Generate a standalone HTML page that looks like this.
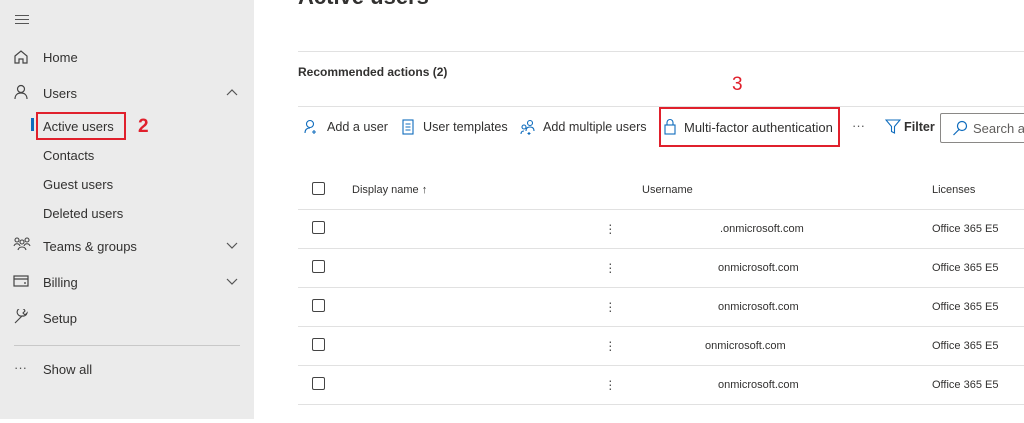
<!DOCTYPE html>
<html><head><style>
*{margin:0;padding:0;box-sizing:border-box}
body{width:1024px;height:423px;overflow:hidden;background:#fff;font-family:"Liberation Sans",sans-serif;color:#323130;position:relative}
.side{position:absolute;left:0;top:0;width:254px;height:423px;background:#ebebeb}
.t{position:absolute;font-size:13px;color:#323130;white-space:nowrap}
.s{font-size:12.5px}
svg{position:absolute}
.red{border:2px solid #e0202c;position:absolute}
.rn{position:absolute;color:#e0202c;font-size:19px}
.hl{position:absolute;height:1px;background:#e1e1e1}
.cb{position:absolute;width:13px;height:13px;border:1.3px solid #444;border-radius:2px;left:312px}
.dots{position:absolute;left:608px;font-size:14px;color:#555;line-height:4px;width:4px;text-align:center}
</style></head><body>
<div class="side"></div>
<div style="position:absolute;left:0;top:419px;width:254px;height:4px;background:#fff"></div>
<div style="position:absolute;left:15px;top:15px;width:14px;height:1px;background:#555;box-shadow:0 4px 0 #555,0 8px 0 #555"></div>
<svg style="left:13px;top:49px" width="16" height="16" viewBox="0 0 16 16" fill="none" stroke="#444" stroke-width="1.2"><path d="M2 7L8 2l6 5v7H10V10H6v4H2z"/></svg>
<div class="t" style="left:43px;top:50px">Home</div>
<svg style="left:13px;top:84px" width="16" height="16" viewBox="0 0 16 16" fill="none" stroke="#444" stroke-width="1.2"><circle cx="8" cy="5" r="3.5"/><path d="M2 15c0-4 2.5-6 6-6s6 2 6 6"/></svg>
<div class="t" style="left:43px;top:86px">Users</div>
<svg style="left:226px;top:88px" width="12" height="8" viewBox="0 0 12 8" fill="none" stroke="#555" stroke-width="1.2"><path d="M1 7l5-5 5 5"/></svg>
<div style="position:absolute;left:31px;top:118px;width:3px;height:13px;background:#0f6cbd"></div>
<div class="t" style="left:43px;top:119px">Active users</div>
<div class="red" style="left:36px;top:112px;width:90px;height:28px"></div>
<div class="rn" style="left:138px;top:116px;font-weight:bold">2</div>
<div class="t" style="left:43px;top:148px">Contacts</div>
<div class="t" style="left:43px;top:177px">Guest users</div>
<div class="t" style="left:43px;top:206px">Deleted users</div>
<svg style="left:13px;top:237px" width="18" height="14" viewBox="0 0 18 14" fill="none" stroke="#444" stroke-width="1.1"><circle cx="4" cy="3" r="2"/><circle cx="14" cy="3" r="2"/><circle cx="9" cy="5" r="2"/><path d="M1 9c1-3 5-3 6 0M11 9c1-3 5-3 6 0M5 13c1-4 7-4 8 0"/></svg>
<div class="t" style="left:43px;top:239px">Teams &amp; groups</div>
<svg style="left:226px;top:242px" width="12" height="8" viewBox="0 0 12 8" fill="none" stroke="#555" stroke-width="1.2"><path d="M1 1l5 5 5-5"/></svg>
<svg style="left:13px;top:275px" width="16" height="12" viewBox="0 0 16 12" fill="none" stroke="#444" stroke-width="1.2"><rect x="1" y="1" width="14" height="10"/><path d="M1 4h14M11 8h2"/></svg>
<div class="t" style="left:43px;top:275px">Billing</div>
<svg style="left:226px;top:278px" width="12" height="8" viewBox="0 0 12 8" fill="none" stroke="#555" stroke-width="1.2"><path d="M1 1l5 5 5-5"/></svg>
<svg style="left:13px;top:309px" width="16" height="16" viewBox="0 0 16 16" fill="none" stroke="#444" stroke-width="1.1"><path d="M2 14l7-7a4 4 0 1 1 3-5l-2 2 2 2 2-2a4 4 0 0 1-5 3l-7 7z"/></svg>
<div class="t" style="left:43px;top:311px">Setup</div>
<div style="position:absolute;left:14px;top:345px;width:226px;height:1px;background:#c8c8c8"></div>
<div class="t" style="left:14px;top:360px;color:#555">···</div>
<div class="t" style="left:43px;top:362px">Show all</div>

<div style="position:absolute;left:298px;top:-16px;font-size:22px;line-height:26px;font-weight:bold">Active users</div>
<div class="hl" style="left:298px;top:51px;width:726px"></div>
<div class="t" style="left:298px;top:65px;font-size:12px;font-weight:bold">Recommended actions (2)</div>
<div class="rn" style="left:732px;top:74px">3</div>
<div class="hl" style="left:298px;top:106px;width:726px"></div>
<svg style="left:304px;top:119px" width="14" height="16" viewBox="0 0 14 16" fill="none" stroke="#0f6cbd" stroke-width="1.1"><circle cx="6" cy="5" r="3.5"/><path d="M1 14c0-3.5 2-5 5-5M10 11v4M8 13h4"/></svg>
<div class="t" style="left:327px;top:120px;font-size:12.6px">Add a user</div>
<svg style="left:402px;top:119px" width="12" height="16" viewBox="0 0 12 16" fill="none" stroke="#0f6cbd" stroke-width="1.1"><rect x="1" y="1" width="10" height="14"/><path d="M3.5 5h5M3.5 8h5M3.5 11h5"/></svg>
<div class="t" style="left:423px;top:120px;font-size:12.6px">User templates</div>
<svg style="left:520px;top:119px" width="16" height="16" viewBox="0 0 16 16" fill="none" stroke="#0f6cbd" stroke-width="1.1"><circle cx="10" cy="4" r="2.5"/><circle cx="4" cy="8" r="2"/><path d="M6 12c0-3 2-4 4-4s4 1 4 4M1 15c0-2 1-3 3-3M9 13v3M7.5 14.5h3"/></svg>
<div class="t" style="left:543px;top:120px;font-size:12.6px">Add multiple users</div>
<svg style="left:664px;top:118px" width="12" height="17" viewBox="0 0 12 17" fill="none" stroke="#0f6cbd" stroke-width="1.1"><rect x="1" y="7" width="10" height="9"/><path d="M3 7V4.5a3 3 0 0 1 6 0V7"/></svg>
<div class="t" style="left:684px;top:120px">Multi-factor authentication</div>
<div class="red" style="left:659px;top:107px;width:181px;height:40px"></div>
<div class="t" style="left:852px;top:118px;color:#555">···</div>
<svg style="left:885px;top:119px" width="16" height="15" viewBox="0 0 16 15" fill="none" stroke="#0f6cbd" stroke-width="1.1"><path d="M1 1h14l-5.5 6.5V14l-3-1.5v-5z"/></svg>
<div class="t" style="left:904px;top:120px;font-weight:bold;font-size:12.6px">Filter</div>
<div style="position:absolute;left:940px;top:113px;width:90px;height:30px;border:1px solid #8a8886;border-radius:2px"></div>
<svg style="left:952px;top:120px" width="16" height="16" viewBox="0 0 16 16" fill="none" stroke="#0f6cbd" stroke-width="1.2"><circle cx="10" cy="6" r="4.5"/><path d="M7 9.5L1.5 15"/></svg>
<div class="t" style="left:973px;top:121px;color:#605e5c">Search ac</div>

<div class="cb" style="top:182px"></div>
<div class="t s" style="left:352px;top:184px;font-size:11px">Display name ↑</div>
<div class="t s" style="left:642px;top:184px;font-size:11px">Username</div>
<div class="t s" style="left:932px;top:184px;font-size:11px">Licenses</div>
<div class="hl" style="left:298px;top:209px;width:726px"></div>

<div class="cb" style="top:221px"></div><div class="dots" style="top:222px">·<br>·<br>·</div>
<div class="t s" style="left:720px;top:223px;font-size:11px">.onmicrosoft.com</div><div class="t s" style="left:932px;top:223px;font-size:11px">Office 365 E5</div>
<div class="hl" style="left:298px;top:248px;width:726px"></div>
<div class="cb" style="top:260px"></div><div class="dots" style="top:261px">·<br>·<br>·</div>
<div class="t s" style="left:718px;top:262px;font-size:11px">onmicrosoft.com</div><div class="t s" style="left:932px;top:262px;font-size:11px">Office 365 E5</div>
<div class="hl" style="left:298px;top:287px;width:726px"></div>
<div class="cb" style="top:299px"></div><div class="dots" style="top:300px">·<br>·<br>·</div>
<div class="t s" style="left:718px;top:301px;font-size:11px">onmicrosoft.com</div><div class="t s" style="left:932px;top:301px;font-size:11px">Office 365 E5</div>
<div class="hl" style="left:298px;top:326px;width:726px"></div>
<div class="cb" style="top:338px"></div><div class="dots" style="top:339px">·<br>·<br>·</div>
<div class="t s" style="left:705px;top:340px;font-size:11px">onmicrosoft.com</div><div class="t s" style="left:932px;top:340px;font-size:11px">Office 365 E5</div>
<div class="hl" style="left:298px;top:365px;width:726px"></div>
<div class="cb" style="top:377px"></div><div class="dots" style="top:378px">·<br>·<br>·</div>
<div class="t s" style="left:718px;top:379px;font-size:11px">onmicrosoft.com</div><div class="t s" style="left:932px;top:379px;font-size:11px">Office 365 E5</div>
<div class="hl" style="left:298px;top:404px;width:726px"></div>
</body></html>
